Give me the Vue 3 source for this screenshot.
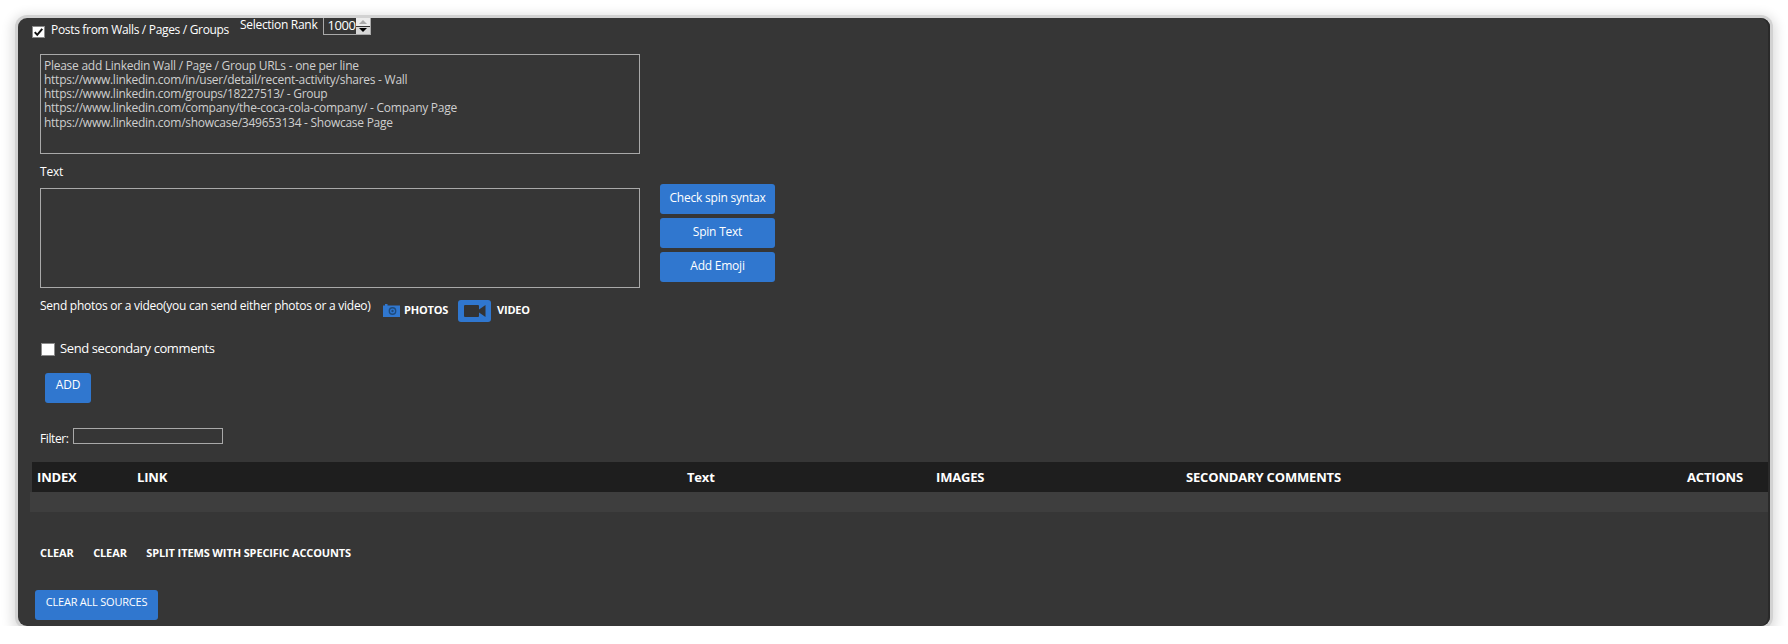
<script setup>
const placeholder = `Please add Linkedin Wall / Page / Group URLs - one per line
https://www.linkedin.com/in/user/detail/recent-activity/shares - Wall
https://www.linkedin.com/groups/18227513/ - Group
https://www.linkedin.com/company/the-coca-cola-company/ - Company Page
https://www.linkedin.com/showcase/349653134 - Showcase Page`
const columns = ['INDEX', 'LINK', 'Text', 'IMAGES', 'SECONDARY COMMENTS', 'ACTIONS']
const sideButtons = ['Check spin syntax', 'Spin Text', 'Add Emoji']
</script>

<template>
  <div class="panel">
    <div class="top-row">
      <span class="check checked">
        <svg viewBox="0 0 13 12" width="11" height="10"><path d="M2 6.2 5 9.4 11 2.2" fill="none" stroke="#111" stroke-width="2.4" /></svg>
      </span>
      <label class="posts-label">Posts from Walls / Pages / Groups</label>
      <label class="rank-label">Selection Rank</label>
      <div class="spin-box">
        <span class="spin-value">1000</span>
        <span class="spin-buttons">
          <span class="spin-btn up"><i></i></span>
          <span class="spin-btn down"><i></i></span>
        </span>
      </div>
    </div>

    <textarea class="area urls" :placeholder="placeholder"></textarea>

    <div class="field-label">Text</div>
    <div class="text-row">
      <textarea class="area"></textarea>
      <div class="side-buttons">
        <button v-for="b in sideButtons" :key="b" class="btn side">{{ b }}</button>
      </div>
    </div>

    <div class="media-row">
      <span class="media-text">Send photos or a video(you can send either photos or a video)</span>
      <svg class="camera" viewBox="0 0 17 14" width="17" height="14">
        <path d="M0 2.5h2V1h2.5v1.5H17V14H0z" fill="#3077cf" />
        <circle cx="9.5" cy="8" r="3.9" fill="#1f4a7a" />
        <circle cx="9.5" cy="8" r="2.5" fill="#3077cf" />
        <circle cx="9.5" cy="8" r="1.2" fill="#1f4a7a" />
      </svg>
      <span class="media-name photos">PHOTOS</span>
      <span class="video-tile">
        <svg viewBox="0 0 22 14" width="22" height="14">
          <rect x="0" y="1" width="15" height="12" rx="1" fill="#333" />
          <path d="M15 5.5 21.5 1v12L15 8.5z" fill="#333" />
        </svg>
      </span>
      <span class="media-name video">VIDEO</span>
    </div>

    <div class="secondary-row">
      <span class="check plain"></span>
      <label class="secondary-label">Send secondary comments</label>
    </div>

    <button class="btn add">ADD</button>

    <div class="filter-row">
      <label class="filter-label">Filter:</label>
      <input class="filter-input" type="text" />
    </div>

    <div class="table">
      <div class="thead">
        <div v-for="c in columns" :key="c" class="th">{{ c }}</div>
      </div>
      <div class="tbody-row"></div>
    </div>

    <div class="links-row">
      <a class="link">CLEAR</a>
      <a class="link">CLEAR</a>
      <a class="link">SPLIT ITEMS WITH SPECIFIC ACCOUNTS</a>
    </div>

    <button class="btn clear-all">CLEAR ALL SOURCES</button>
  </div>
</template>

<style>
html, body { background: #fff; margin: 0; }
</style>

<style scoped>
.panel {
  box-sizing: border-box;
  width: 1752px;
  height: 608px;
  margin: 18px 0 0 18px;
  background: #363636;
  border-radius: 9px;
  color: #fff;
  font-family: "Open Sans", "Noto Sans", sans-serif;
  font-size: 12px;
  box-shadow: inset -2px 0 0 #2a2a2a, 0 0 0 3px #d2d2d2, 0 3px 12px 6px rgba(0, 0, 0, 0.14);
}
.top-row {
  height: 36px;
  display: flex;
  align-items: flex-start;
}
.check {
  display: flex;
  align-items: center;
  justify-content: center;
  flex: none;
  background: #fff;
  border: 1px solid #8a8a8a;
  box-sizing: border-box;
}
.check.checked {
  width: 13px;
  height: 12px;
  margin: 8px 0 0 14px;
}
.posts-label {
  margin: 3px 0 0 6px;
  line-height: 18px;
  letter-spacing: -0.32px;
}
.rank-label {
  margin: 0 0 0 11px;
  line-height: 14px;
  letter-spacing: -0.3px;
}
.spin-box {
  margin: 0 0 0 6px;
  width: 48px;
  height: 17px;
  border: 1px solid #a9a9a9;
  border-top: none;
  box-sizing: border-box;
  display: flex;
  justify-content: space-between;
}
.spin-value {
  line-height: 15px;
  padding: 0 0 0 3px;
  font-size: 13px;
  letter-spacing: -0.4px;
}
.spin-buttons {
  width: 16px;
  display: flex;
  flex-direction: column;
  gap: 1px;
}
.spin-btn {
  flex: 1;
  display: flex;
  align-items: center;
  justify-content: center;
}
.spin-btn i {
  width: 0;
  height: 0;
  border-left: 4px solid transparent;
  border-right: 4px solid transparent;
}
.spin-btn.up { background: #ececec; }
.spin-btn.up i { border-bottom: 4px solid #aaa; }
.spin-btn.down { background: #d6d6d6; }
.spin-btn.down i { border-top: 4px solid #000; }
.area {
  display: block;
  box-sizing: border-box;
  width: 600px;
  height: 100px;
  margin: 0 0 0 22px;
  padding: 3.5px 3px 3px;
  background: #363636;
  border: 1px solid #a9a9a9;
  color: #fff;
  font-family: inherit;
  font-size: 12px;
  line-height: 14.25px;
  letter-spacing: -0.26px;
  resize: none;
  outline: none;
}
.area::placeholder { color: #cfcfcf; opacity: 1; }
.field-label {
  margin: 9px 0 7px 22px;
  line-height: 18px;
  letter-spacing: -0.2px;
}
.text-row { display: flex; align-items: flex-start; }
.side-buttons {
  display: flex;
  flex-direction: column;
  gap: 4px;
  margin: -4px 0 0 20px;
}
.btn {
  display: block;
  background: #3077cf;
  color: #fff;
  border: none;
  border-radius: 3px;
  height: 30px;
  padding: 0 0 4px;
  font-family: inherit;
  font-size: 12px;
  letter-spacing: -0.22px;
}
.btn.side { width: 115px; }
.media-row {
  margin: 12px 0 0 22px;
  height: 22px;
  display: flex;
  align-items: flex-start;
}
.media-text {
  margin-top: -1px;
  line-height: 14px;
  width: 343px;
  letter-spacing: -0.26px;
}
.camera { margin-top: 3px; }
.media-name {
  font-weight: 700;
  font-size: 11px;
  line-height: 20px;
  letter-spacing: -0.2px;
}
.photos { margin-left: 4px; width: 54px; }
.video-tile {
  width: 33px;
  height: 22px;
  background: #3077cf;
  border-radius: 3px;
  display: flex;
  align-items: center;
  justify-content: center;
}
.video { margin-left: 6px; }
.secondary-row {
  margin: 17px 0 0 23px;
  height: 18px;
  display: flex;
  align-items: flex-start;
}
.check.plain {
  width: 14px;
  height: 13px;
  margin-top: 4px;
}
.secondary-label {
  margin-left: 5px;
  font-size: 13px;
  line-height: 18px;
  letter-spacing: -0.4px;
}
.btn.add {
  width: 46px;
  margin: 16px 0 0 27px;
  padding-bottom: 7px;
}
.filter-row {
  margin: 25px 0 0 22px;
  height: 15px;
  display: flex;
  align-items: flex-start;
}
.filter-label {
  line-height: 22px;
  width: 33px;
  letter-spacing: -0.4px;
}
.filter-input {
  box-sizing: border-box;
  width: 150px;
  height: 16px;
  background: #363636;
  border: 1px solid #a9a9a9;
  padding: 0;
  outline: none;
}
.table { margin: 19px 2px 0 12px; }
.thead {
  margin-left: 2px;
  height: 30px;
  background: #1e1e1e;
  display: grid;
  grid-template-columns: 100px 550px 249px 250px 501px 1fr;
  align-items: center;
}
.th {
  font-weight: 700;
  font-size: 13px;
  letter-spacing: -0.17px;
  padding-left: 5px;
  line-height: 30px;
}
.tbody-row { height: 20px; background: #3e3e3e; }
.links-row {
  margin: 32px 0 0 22px;
  height: 18px;
  display: flex;
  gap: 19.5px;
}
.link {
  font-weight: 700;
  font-size: 11px;
  line-height: 18px;
  letter-spacing: -0.12px;
}
.btn.clear-all {
  width: 123px;
  margin: 28px 0 0 17px;
  font-size: 11px;
  padding-bottom: 7px;
}
</style>
